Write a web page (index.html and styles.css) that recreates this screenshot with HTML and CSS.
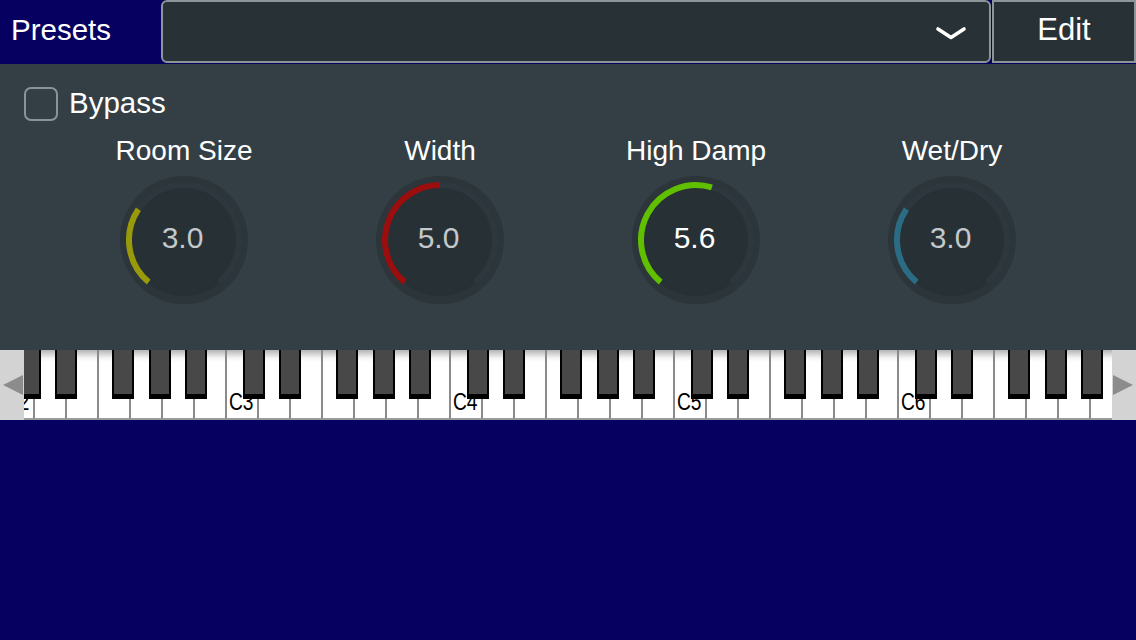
FILE: index.html
```html
<!DOCTYPE html>
<html>
<head>
<meta charset="utf-8">
<link rel="stylesheet" href="styles.css">
</head>
<body>
<div class="header">
  <div class="presets-label">Presets</div>
  <div class="dropdown">
    <svg class="chevron" width="32" height="16" viewBox="0 0 32 16"><polyline points="3,3 16,11.5 29,3" fill="none" stroke="#ffffff" stroke-width="3.6" stroke-linecap="round" stroke-linejoin="round"/></svg>
  </div>
  <div class="edit-btn">Edit</div>
</div>

<div class="panel">
  <div class="bypass"><span class="checkbox"></span><span class="bypass-text">Bypass</span></div>
  <div class="knobs">
    <div class="knob-col">
      <div class="knob-label">Room Size</div>
      <div class="knob">
        <svg width="128" height="128" viewBox="0 0 128 128">
          <circle cx="64" cy="64" r="64" class="k-outer"/>
          <circle cx="64" cy="64" r="56" class="k-inner"/>
          <path d="M 28.65 106.13 A 55 55 0 1 1 99.35 106.13" class="k-track"/>
          <path d="M 28.65 106.13 A 55 55 0 0 1 18.40 33.24" class="k-arc" stroke="#989a0a"/>
        </svg>
        <span class="knob-value">3.0</span>
      </div>
    </div>
    <div class="knob-col">
      <div class="knob-label">Width</div>
      <div class="knob">
        <svg width="128" height="128" viewBox="0 0 128 128">
          <circle cx="64" cy="64" r="64" class="k-outer"/>
          <circle cx="64" cy="64" r="56" class="k-inner"/>
          <path d="M 28.65 106.13 A 55 55 0 1 1 99.35 106.13" class="k-track"/>
          <path d="M 28.65 106.13 A 55 55 0 0 1 64 9" class="k-arc" stroke="#9c0e0e"/>
        </svg>
        <span class="knob-value">5.0</span>
      </div>
    </div>
    <div class="knob-col">
      <div class="knob-label">High Damp</div>
      <div class="knob">
        <svg width="128" height="128" viewBox="0 0 128 128">
          <circle cx="64" cy="64" r="64" class="k-outer"/>
          <circle cx="64" cy="64" r="56" class="k-inner"/>
          <path d="M 28.65 106.13 A 55 55 0 1 1 99.35 106.13" class="k-track"/>
          <path d="M 28.65 106.13 A 55 55 0 0 1 79.90 11.35" class="k-arc" stroke="#60c000"/>
        </svg>
        <span class="knob-value active">5.6</span>
      </div>
    </div>
    <div class="knob-col">
      <div class="knob-label">Wet/Dry</div>
      <div class="knob">
        <svg width="128" height="128" viewBox="0 0 128 128">
          <circle cx="64" cy="64" r="64" class="k-outer"/>
          <circle cx="64" cy="64" r="56" class="k-inner"/>
          <path d="M 28.65 106.13 A 55 55 0 1 1 99.35 106.13" class="k-track"/>
          <path d="M 28.65 106.13 A 55 55 0 0 1 18.40 33.24" class="k-arc" stroke="#2b6c84"/>
        </svg>
        <span class="knob-value">3.0</span>
      </div>
    </div>
  </div>
</div>

<div class="keyboard">
  <div class="arrow">
    <svg width="24" height="70" viewBox="0 0 24 70"><polygon points="3,35 23,25 23,45" fill="#8c8c8c"/></svg>
  </div>
  <div class="keys-viewport">
    <div class="keys">
      <div class="octave">
        <div class="wkey"><span class="note">C2</span></div><div class="wkey"></div><div class="wkey"></div><div class="wkey"></div><div class="wkey"></div><div class="wkey"></div><div class="wkey"></div>
        <div class="bkey b1"></div><div class="bkey b2"></div><div class="bkey b3"></div><div class="bkey b4"></div><div class="bkey b5"></div>
      </div>
      <div class="octave">
        <div class="wkey"><span class="note">C3</span></div><div class="wkey"></div><div class="wkey"></div><div class="wkey"></div><div class="wkey"></div><div class="wkey"></div><div class="wkey"></div>
        <div class="bkey b1"></div><div class="bkey b2"></div><div class="bkey b3"></div><div class="bkey b4"></div><div class="bkey b5"></div>
      </div>
      <div class="octave">
        <div class="wkey"><span class="note">C4</span></div><div class="wkey"></div><div class="wkey"></div><div class="wkey"></div><div class="wkey"></div><div class="wkey"></div><div class="wkey"></div>
        <div class="bkey b1"></div><div class="bkey b2"></div><div class="bkey b3"></div><div class="bkey b4"></div><div class="bkey b5"></div>
      </div>
      <div class="octave">
        <div class="wkey"><span class="note">C5</span></div><div class="wkey"></div><div class="wkey"></div><div class="wkey"></div><div class="wkey"></div><div class="wkey"></div><div class="wkey"></div>
        <div class="bkey b1"></div><div class="bkey b2"></div><div class="bkey b3"></div><div class="bkey b4"></div><div class="bkey b5"></div>
      </div>
      <div class="octave">
        <div class="wkey"><span class="note">C6</span></div><div class="wkey"></div><div class="wkey"></div><div class="wkey"></div><div class="wkey"></div><div class="wkey"></div><div class="wkey"></div>
        <div class="bkey b1"></div><div class="bkey b2"></div><div class="bkey b3"></div><div class="bkey b4"></div><div class="bkey b5"></div>
      </div>
    </div>
  </div>
  <div class="arrow">
    <svg width="24" height="70" viewBox="0 0 24 70"><polygon points="1,25 1,45 21,35" fill="#8c8c8c"/></svg>
  </div>
</div>
</body>
</html>
```

FILE: styles.css
```css
* { box-sizing: border-box; }

html, body {
  margin: 0;
  padding: 0;
}

body {
  width: 1136px;
  height: 640px;
  overflow: hidden;
  background: #060060;
  font-family: "Liberation Sans", Arial, Helvetica, sans-serif;
  color: #ffffff;
}

/* Header */
.header {
  display: flex;
  align-items: flex-start;
  height: 64px;
}

.presets-label {
  width: 160px;
  height: 63px;
  display: flex;
  align-items: center;
  padding-left: 11px;
  padding-bottom: 3px;
  font-size: 29.5px;
}

.dropdown {
  flex: 1;
  height: 63px;
  margin-left: 1px;
  border: 2px solid #8d9598;
  border-radius: 6px;
  background: #283236;
  display: flex;
  align-items: center;
  justify-content: flex-end;
  padding-right: 22px;
  padding-top: 5px;
}

.chevron { display: block; }

.edit-btn {
  width: 144px;
  height: 63px;
  margin-left: 1px;
  border: 2px solid #8d9598;
  background: #283236;
  display: flex;
  align-items: center;
  justify-content: center;
  padding-bottom: 4px;
  font-size: 31px;
}

/* Panel */
.panel {
  height: 286px;
  background: #343f45;
  padding-top: 23px;
}

.bypass {
  display: flex;
  align-items: center;
  height: 34px;
  padding-left: 24px;
}

.checkbox {
  width: 34px;
  height: 34px;
  border: 2px solid #8a9498;
  border-radius: 7px;
}

.bypass-text {
  margin-left: 11px;
  font-size: 29.5px;
  padding-bottom: 3px;
}

.knobs {
  display: grid;
  grid-template-columns: repeat(4, 256px);
  justify-content: center;
  margin-top: 14px;
}

.knob-col {
  display: flex;
  flex-direction: column;
  align-items: center;
}

.knob-label {
  font-size: 28px;
  line-height: 32px;
  white-space: nowrap;
}

.knob {
  margin-top: 9px;
  display: grid;
  place-items: center;
  width: 128px;
  height: 128px;
}

.knob > * { grid-area: 1 / 1; }

.knob svg { display: block; }

.k-outer { fill: #2b353a; }
.k-inner { fill: #263035; }
.k-track { fill: none; stroke: #2d373d; stroke-width: 6; }
.k-arc { fill: none; stroke-width: 6; }

.knob-value {
  font-size: 30px;
  color: #c4c8ca;
  padding-bottom: 5px;
  margin-left: -3px;
}

.knob-value.active { color: #ffffff; }

/* Keyboard */
.keyboard {
  display: flex;
  height: 70px;
}

.arrow {
  width: 24px;
  height: 70px;
  background: #d3d3d3;
  flex: none;
}

.arrow svg { display: block; }

.keys-viewport {
  flex: 1;
  overflow: hidden;
  height: 70px;
}

.keys {
  display: flex;
  margin-left: -23px;
  height: 70px;
}

.octave {
  position: relative;
  display: flex;
  flex: none;
  height: 70px;
}

.wkey {
  width: 32px;
  height: 70px;
  flex: none;
  border-left: 2px solid #8a8a8a;
  border-bottom: 2px solid #9a9a9a;
  background: linear-gradient(to bottom, #b4b4b4 0px, #f4f4f4 8px, #ffffff 12px);
  display: flex;
  align-items: flex-end;
  padding-left: 2px;
  padding-bottom: 4px;
}

.note {
  font-size: 24px;
  line-height: 1;
  color: #000000;
  transform: scaleX(0.8);
  transform-origin: left bottom;
  white-space: nowrap;
}

.bkey {
  position: absolute;
  top: 0;
  width: 22px;
  height: 49px;
  background: #484848;
  border-left: 2px solid #000;
  border-right: 2px solid #000;
  border-bottom: 5px solid #000;
}

.b1 { left: 18px; }
.b2 { left: 54px; }
.b3 { left: 111px; }
.b4 { left: 148px; }
.b5 { left: 184px; }
```
